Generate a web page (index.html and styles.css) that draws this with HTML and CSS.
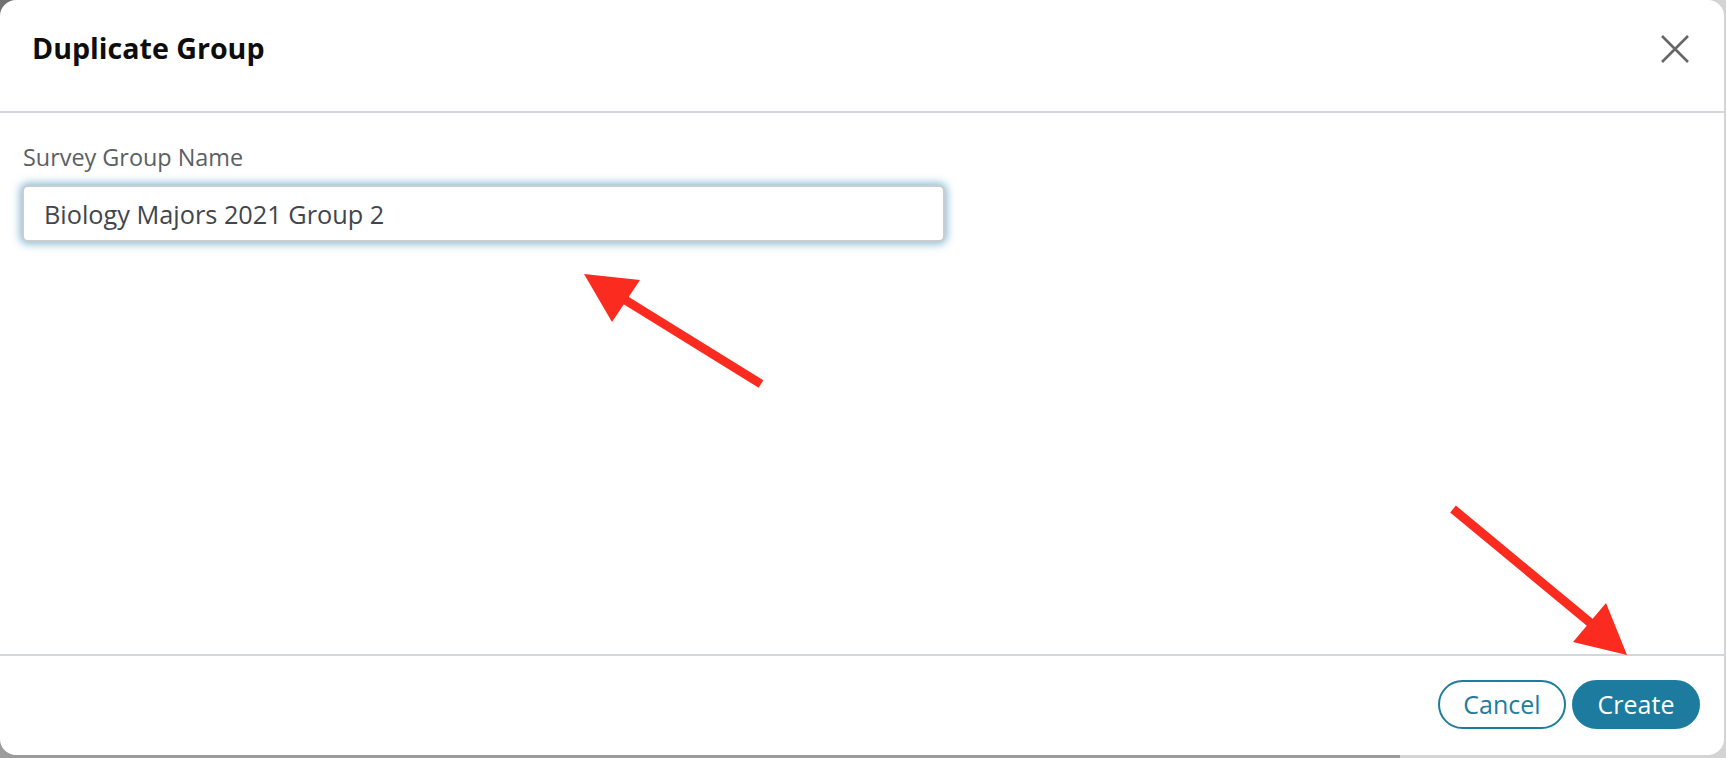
FILE: index.html
```html
<!DOCTYPE html>
<html lang="en">
<head>
<meta charset="utf-8">
<title>Duplicate Group</title>
<link rel="stylesheet" href="styles.css">
</head>
<body>
<div class="dialog">
  <header class="dialog-header">
    <h1 class="dialog-title">Duplicate Group</h1>
    <button class="close-btn" aria-label="Close">
      <svg width="28" height="28" viewBox="0 0 28 28"><path d="M1 1 L27 27 M27 1 L1 27" stroke="#666" stroke-width="2.6" fill="none"/></svg>
    </button>
  </header>
  <main class="dialog-body">
    <label class="field-label" for="groupName">Survey Group Name</label>
    <input id="groupName" class="field-input" type="text" value="Biology Majors 2021 Group 2">
  </main>
  <footer class="dialog-footer">
    <button class="btn btn-outline">Cancel</button>
    <button class="btn btn-primary">Create</button>
  </footer>
  <svg class="annotations" width="1724" height="755" viewBox="0 0 1724 755">
    <line x1="761" y1="384" x2="622" y2="298" stroke="#fc2b1f" stroke-width="9"/>
    <polygon points="584,274 640,280 612,322" fill="#fc2b1f"/>
    <line x1="1453" y1="509" x2="1593" y2="625" stroke="#fc2b1f" stroke-width="9"/>
    <polygon points="1627,655 1606,603 1573,642" fill="#fc2b1f"/>
  </svg>
</div>
</body>
</html>
```
FILE: styles.css
```css
* { box-sizing: border-box; }

html, body {
  margin: 0;
  padding: 0;
}

body {
  width: 1726px;
  height: 758px;
  overflow: hidden;
  font-family: "Open Sans", "Noto Sans", sans-serif;
  background:
    linear-gradient(#727272, #727272) 0 0 / 24px 24px no-repeat,
    linear-gradient(#9c9c9c, #9c9c9c) 0 730px / 1400px 28px no-repeat,
    #d4d4d4;
}

.dialog {
  position: relative;
  width: 1724px;
  height: 755px;
  background: #ffffff;
  border-radius: 16px;
  display: flex;
  flex-direction: column;
}

.dialog-header {
  height: 113px;
  display: flex;
  justify-content: space-between;
  align-items: flex-start;
  padding: 29px 35px 0 32px;
  border-bottom: 2px solid #d3d7dc;
}

.dialog-title {
  margin: 0;
  font-size: 28.6px;
  line-height: 38px;
  font-weight: 700;
  color: #0d0d0d;
}

.close-btn {
  margin-top: 6px;
  padding: 0;
  width: 28px;
  height: 28px;
  border: 0;
  background: none;
  display: flex;
}

.dialog-body {
  flex: 1;
  display: flex;
  flex-direction: column;
  align-items: flex-start;
  padding: 28px 22px 0 22px;
}

.field-label {
  font-size: 23.4px;
  line-height: 32px;
  color: #5b6064;
  padding-left: 1px;
}

.field-input {
  margin-top: 12px;
  width: 923px;
  height: 57px;
  border: 2px solid #c9cdd1;
  border-radius: 6px;
  box-shadow: 0 0 8px 2px rgba(55, 140, 180, 0.6);
  padding: 0 0 0 20px;
  font-family: "Open Sans", "Noto Sans", sans-serif;
  font-size: 25.3px;
  color: #3f464c;
  outline: none;
  background: #fff;
}

.dialog-footer {
  height: 101px;
  border-top: 2px solid #d3d7dc;
  display: flex;
  justify-content: flex-end;
  align-items: flex-start;
  gap: 6px;
  padding: 24px 24px 0 0;
}

.btn {
  width: 128px;
  height: 49px;
  border-radius: 25px;
  border: 2px solid #1d7d9f;
  font-family: "Open Sans", "Noto Sans", sans-serif;
  font-size: 25px;
  line-height: 1;
  padding: 0;
}

.btn-outline {
  background: #ffffff;
  color: #1d7d9f;
}

.btn-primary {
  background: #1c7b9e;
  color: #ffffff;
  font-weight: 500;
}

.annotations {
  position: absolute;
  left: 0;
  top: 0;
  pointer-events: none;
}
```
